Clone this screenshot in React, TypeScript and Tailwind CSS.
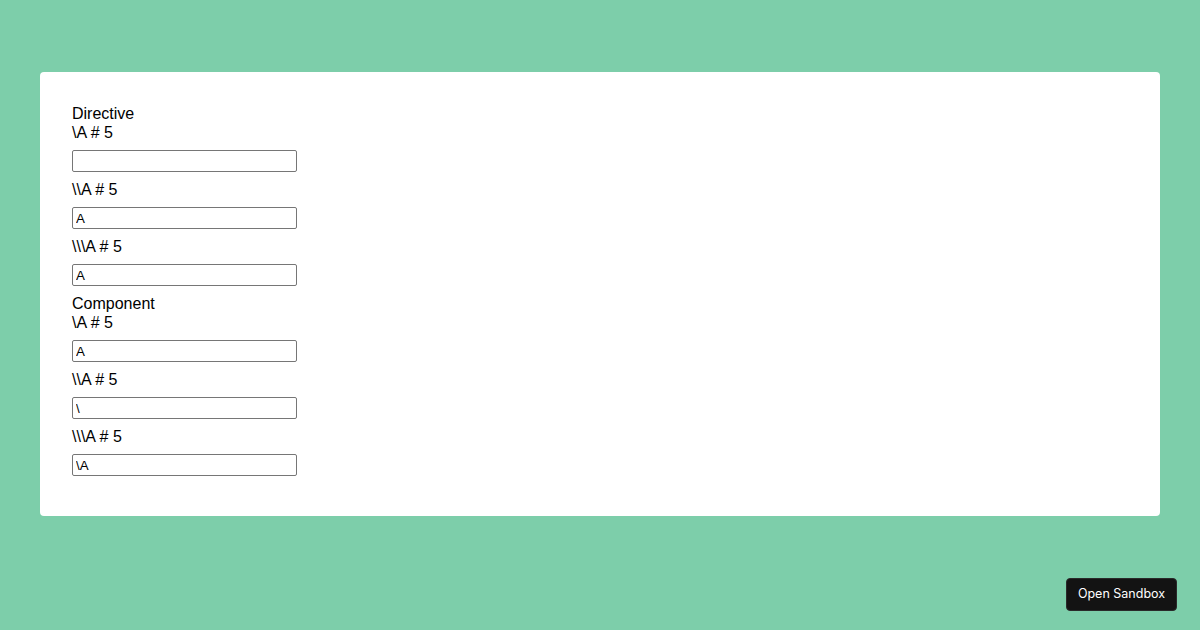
import React from "react";

const rows = [
  { label: "\\A # 5", value: "" },
  { label: "\\\\A # 5", value: "A" },
  { label: "\\\\\\A # 5", value: "A" },
];
const rows2 = [
  { label: "\\A # 5", value: "A" },
  { label: "\\\\A # 5", value: "\\" },
  { label: "\\\\\\A # 5", value: "\\A" },
];

function Field({ label, value }: { label: string; value: string }) {
  return (
    <div>
      <div className="leading-[19px]">{label}</div>
      <input
        readOnly
        value={value}
        className="my-2 block h-[22px] w-[225px] rounded-[2px] border border-[#767676] bg-white px-[3px] text-[13.33px] leading-[18px] text-black outline-none"
        style={{ fontFamily: '"Liberation Sans", Arial, sans-serif' }}
      />
    </div>
  );
}

export default function App() {
  return (
    <div
      className="relative h-[630px] w-full bg-[#7dceaa] px-10 pt-[72px] text-base text-black"
      style={{ fontFamily: '"Liberation Sans", Arial, sans-serif' }}
    >
      <div className="rounded-[4px] bg-white p-8">
        <div className="leading-[19px]">Directive</div>
        {rows.map((r, i) => (
          <Field key={i} label={r.label} value={r.value} />
        ))}
        <div className="leading-[19px]">Component</div>
        {rows2.map((r, i) => (
          <Field key={i} label={r.label} value={r.value} />
        ))}
      </div>
      <button
        className="absolute bottom-[19px] right-[23px] flex h-[33px] w-[111px] items-center justify-center rounded-[4px] border border-[#2a2a2a] bg-[#131313] text-[12.5px] text-white"
        style={{ fontFamily: 'Inter, "Liberation Sans", sans-serif' }}
      >
        Open Sandbox
      </button>
    </div>
  );
}
